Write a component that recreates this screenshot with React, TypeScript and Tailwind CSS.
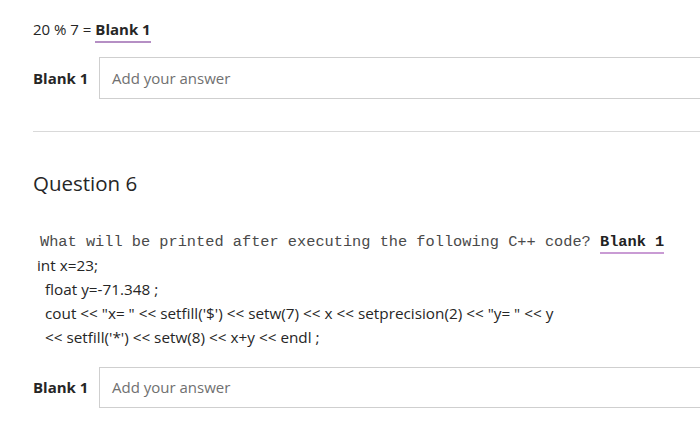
export default function App() {
  const font = { fontFamily: '"Open Sans", "Liberation Sans", sans-serif' };
  return (
    <div className="w-[700px] h-[425px] overflow-hidden bg-white text-[#262626]" style={font}>
      <div className="pl-[33px]">
        {/* Question 5 tail */}
        <div className="pt-[18px] text-[15px] leading-[22px]">
          20 % 7 ={' '}
          <span className="font-bold border-b-2 border-[#b58fc4] pb-[2px]">Blank 1</span>
        </div>
        <div className="mt-[17px] flex items-center">
          <span className="w-[66px] text-[15px] font-bold">Blank 1</span>
          <div className="flex-1 h-[42px] border border-r-0 border-[#cfcfcf] flex items-center pl-[12px] text-[15px] text-[#707070]">
            Add your answer
          </div>
        </div>
        <div className="mt-[32px] border-t border-[#d9d9d9]" />

        {/* Question 6 */}
        <h2 className="mt-[37px] text-[20.5px] leading-[28px] font-normal">Question 6</h2>

        <div className="mt-[34px]">
          <div className="pl-[7px] text-[15.3px] leading-[22px] text-[#4a4a4a]" style={{ fontFamily: '"Liberation Mono", "Courier New", monospace' }}>
            What will be printed after executing the following C++ code?{' '}
            <span className="font-bold text-[#222] border-b-2 border-[#c99bd4] pb-[1px]">Blank 1</span>
          </div>
          <div className="text-[15.3px] leading-[24px]">
            <div className="pl-[4px]">int x=23;</div>
            <div className="pl-[12px]">float y=-71.348 ;</div>
            <div className="pl-[12px]">cout &lt;&lt; "x= " &lt;&lt; setfill('$') &lt;&lt; setw(7) &lt;&lt; x &lt;&lt; setprecision(2) &lt;&lt; "y= " &lt;&lt; y</div>
            <div className="pl-[12px]">&lt;&lt; setfill('*') &lt;&lt; setw(8) &lt;&lt; x+y &lt;&lt; endl ;</div>
          </div>
        </div>

        <div className="mt-[18px] flex items-center">
          <span className="w-[66px] text-[15px] font-bold">Blank 1</span>
          <div className="flex-1 h-[41px] border border-r-0 border-[#cfcfcf] flex items-center pl-[12px] text-[15px] text-[#707070]">
            Add your answer
          </div>
        </div>
      </div>
    </div>
  );
}
